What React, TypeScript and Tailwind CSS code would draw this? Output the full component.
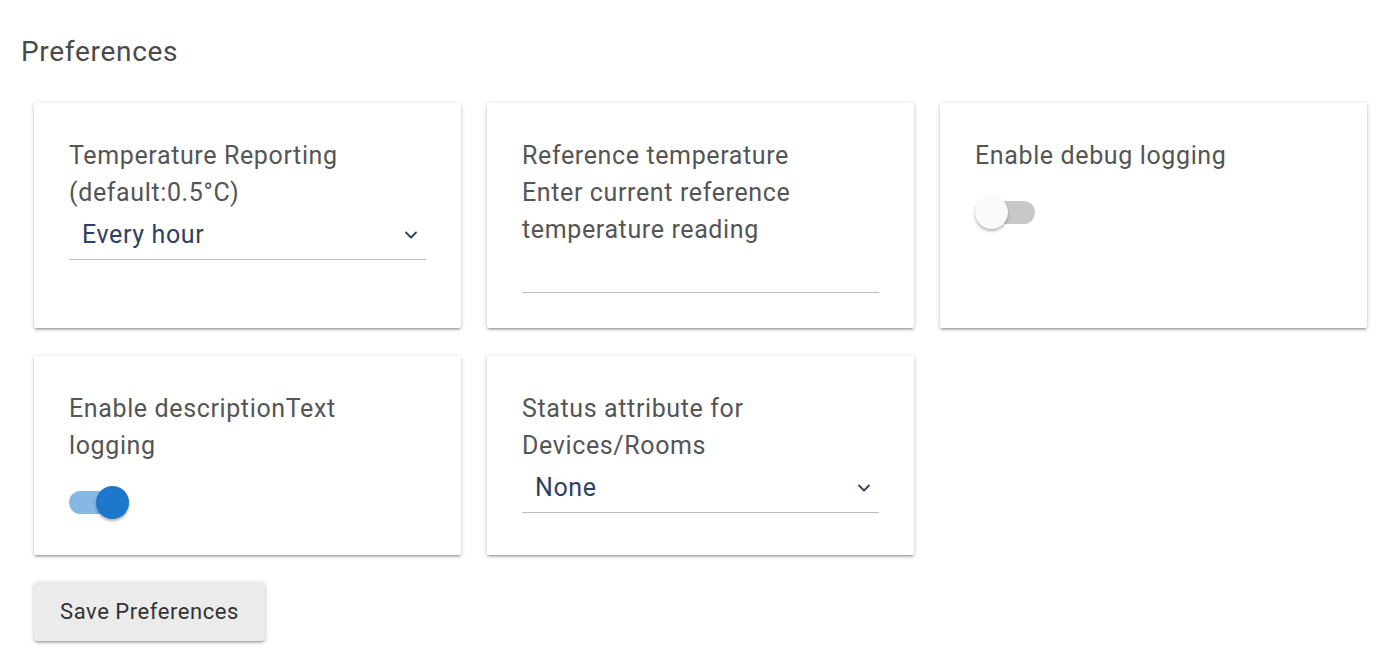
import React from "react";

const Chevron = () => (
  <svg width="20" height="20" viewBox="0 0 24 24" fill="none" stroke="#2e4164" strokeWidth="2.2" strokeLinecap="round" strokeLinejoin="round">
    <path d="M6 9l6 6 6-6" />
  </svg>
);

const Select = ({ value }: { value: string }) => (
  <div className="flex h-[49px] items-center justify-between border-b border-[#bdbdbd] pl-[13px] pr-[5px]">
    <span className="text-[25px] tracking-[0.025em] text-[#2e4164]">{value}</span>
    <Chevron />
  </div>
);

const Switch = ({ on }: { on: boolean }) => (
  <div className="flex h-[56px] items-end pb-[1px]">
    <div className="relative h-[33px] w-[60px]">
      <div
        className={
          on
            ? "absolute left-0 top-[5px] h-[23px] w-[60px] rounded-full bg-[#86b8e4]"
            : "absolute left-0 top-[5px] h-[23px] w-[60px] rounded-full bg-[#c8c8c8]"
        }
      />
      <div
        className={
          on
            ? "absolute left-[27px] top-0 h-[33px] w-[33px] rounded-full bg-[#1d77cc] shadow-[0_2px_3px_rgba(0,0,0,0.3)]"
            : "absolute left-0 top-0 h-[33px] w-[33px] rounded-full bg-[#fafafa] shadow-[0_2px_3px_rgba(0,0,0,0.3)]"
        }
      />
    </div>
  </div>
);

const Card = ({ children }: { children: React.ReactNode }) => (
  <div className="rounded-[2px] bg-white px-[35px] pb-[35px] pt-[34px] shadow-[0_2px_2px_rgba(0,0,0,0.14),0_3px_1px_-2px_rgba(0,0,0,0.12),0_1px_5px_rgba(0,0,0,0.2)]">
    {children}
  </div>
);

const Label = ({ children }: { children: React.ReactNode }) => (
  <div className="text-[25px] leading-[37px] tracking-[0.025em] text-[#555555]">{children}</div>
);

export default function App() {
  return (
    <div
      className="min-h-[664px] bg-white"
      style={{ fontFamily: "Roboto, 'Noto Sans', sans-serif" }}
    >
      <h1 className="pl-[21px] pt-[33px] text-[28px] leading-[37px] tracking-[0.025em] text-[#4a4a4a]">Preferences</h1>
      <div className="ml-[34px] mt-[33px] grid grid-cols-[427px_427px_427px] gap-x-[26px] gap-y-[28px]">
        <Card>
          <Label>
            Temperature Reporting
            <br />
            (default:0.5°C)
          </Label>
          <Select value="Every hour" />
        </Card>
        <Card>
          <Label>
            Reference temperature
            <br />
            Enter current reference
            <br />
            temperature reading
          </Label>
          <div className="h-[45px] border-b border-[#bdbdbd]" />
        </Card>
        <Card>
          <Label>Enable debug logging</Label>
          <Switch on={false} />
        </Card>
        <Card>
          <Label>
            Enable descriptionText
            <br />
            logging
          </Label>
          <Switch on={true} />
        </Card>
        <Card>
          <Label>
            Status attribute for
            <br />
            Devices/Rooms
          </Label>
          <Select value="None" />
        </Card>
      </div>
      <button className="ml-[34px] mt-[27px] h-[59px] w-[231px] rounded-[4px] bg-[#ebebeb] text-[22px] tracking-[0.025em] text-[#333333] shadow-[0_2px_2px_rgba(0,0,0,0.14),0_3px_1px_-2px_rgba(0,0,0,0.12),0_1px_5px_rgba(0,0,0,0.2)]">
        Save Preferences
      </button>
    </div>
  );
}
